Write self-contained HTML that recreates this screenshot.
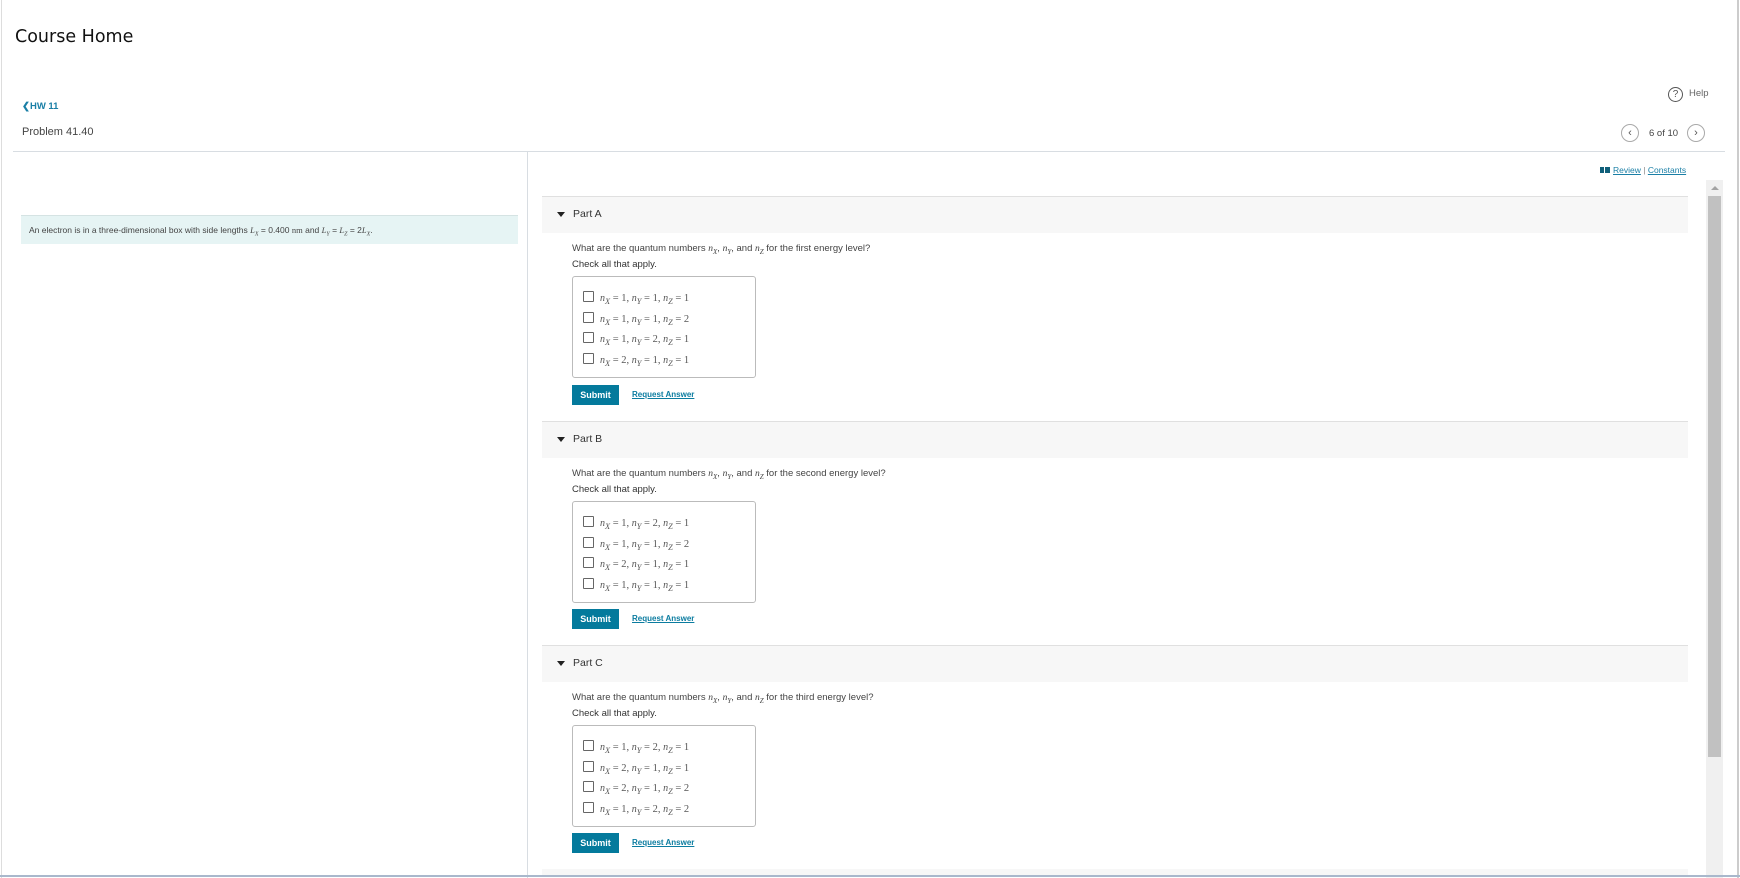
<!DOCTYPE html>
<html><head><meta charset="utf-8"><style>
*{margin:0;padding:0;box-sizing:border-box}
body{width:1740px;height:878px;overflow:hidden;background:#fff;font-family:"Liberation Sans",Arial,sans-serif;color:#333;position:relative}
.a{position:absolute}
.m{font-family:"Liberation Serif",serif;font-style:italic}
.part{position:absolute;left:542px;width:1146px;height:37px;background:#f7f7f7;border-top:1px solid #e0e0e0}
.part .tri{position:absolute;left:15px;top:15px;width:0;height:0;border-left:4px solid transparent;border-right:4px solid transparent;border-top:5px solid #222}
.part .t{position:absolute;left:31px;top:11px;font-size:10.5px;color:#333}
.q{position:absolute;left:572px;font-size:9.5px;color:#444;white-space:nowrap}
.box{position:absolute;left:572px;width:184px;height:102px;border:1px solid #bbb;border-radius:3px}
.opt{position:absolute;left:10px;font-family:"Liberation Serif",serif;font-size:10.5px;color:#555;white-space:nowrap}
.opt:before{content:"";display:inline-block;width:9px;height:9px;border:1px solid #666;border-radius:1px;margin-right:6px;vertical-align:-1px}
.opt i{font-size:10px}
.sub{position:absolute;left:572px;width:47px;height:20px;background:#047a9c;color:#fff;font-size:9px;font-weight:bold;text-align:center;line-height:20px}
.req{position:absolute;left:632px;font-size:8px;font-weight:bold;color:#0b7ca0;text-decoration:underline}
</style></head><body>
<div class="a" style="left:1px;top:0;width:1px;height:878px;background:#ddd"></div>
<div class="a" style="left:1737px;top:0;width:2px;height:878px;background:#ccc"></div>
<div class="a" style="left:15px;top:27px;font-size:17.5px;color:#111;font-family:'DejaVu Sans',sans-serif">Course Home</div>
<div class="a" style="left:22px;top:101px;font-size:9.5px;font-weight:bold;color:#1a7fa6">&#10094;HW 11</div>
<div class="a" style="left:22px;top:126px;font-size:11px;color:#444">Problem 41.40</div>
<div class="a" style="left:1668px;top:87px;width:15px;height:15px;border:1.3px solid #555;border-radius:50%;font-size:10px;text-align:center;line-height:13px;color:#555">?</div>
<div class="a" style="left:1689px;top:88px;font-size:9.5px;color:#666">Help</div>
<div class="a" style="left:1621px;top:124px;width:18px;height:18px;border:1px solid #aaa;border-radius:50%;font-size:11px;text-align:center;line-height:16px;color:#555">&lsaquo;</div>
<div class="a" style="left:1649px;top:128px;font-size:9.5px;color:#444">6 of 10</div>
<div class="a" style="left:1687px;top:124px;width:18px;height:18px;border:1px solid #aaa;border-radius:50%;font-size:11px;text-align:center;line-height:16px;color:#555">&rsaquo;</div>
<div class="a" style="left:13px;top:151px;width:1712px;height:1px;background:#d8dde2"></div>
<div class="a" style="left:527px;top:152px;width:1px;height:726px;background:#d8dde2"></div>
<div class="a" style="left:21px;top:215px;width:497px;height:29px;background:#e6f4f4;border-top:1px solid #d5e3e3"></div>
<div class="a" style="left:29px;top:225px;font-size:8.5px;color:#444;white-space:nowrap">An electron is in a three-dimensional box with side lengths <span class="m">L<sub style="font-size:6px">X</sub></span> = 0.400 <span style="font-family:'Liberation Serif',serif">nm</span> and <span class="m">L<sub style="font-size:6px">Y</sub></span> = <span class="m">L<sub style="font-size:6px">Z</sub></span> = 2<span class="m">L<sub style="font-size:6px">X</sub></span>.</div>
<div class="a" style="left:1600px;top:167px;width:4px;height:6px;background:#0f5f7a"></div>
<div class="a" style="left:1605px;top:167px;width:5px;height:6px;background:#0f5f7a"></div>
<div class="a" style="left:1613px;top:165px;font-size:8.5px;color:#1a7fa6;white-space:nowrap"><u>Review</u> <span style="color:#888">|</span> <u>Constants</u></div>
<div class="a" style="left:1706px;top:180px;width:17px;height:698px;background:#f0f0f0"></div>
<div class="a" style="left:1711px;top:186px;width:0;height:0;border-left:4px solid transparent;border-right:4px solid transparent;border-bottom:4px solid #a3a3a3"></div>
<div class="a" style="left:1708px;top:196px;width:13px;height:561px;background:#c1c1c1"></div>
<div class="a" style="left:0;top:875px;width:1740px;height:2px;background:#a9b8cc"></div>

<div class="part" style="top:196px"><div class="tri"></div><div class="t">Part A</div></div>
<div class="q" style="top:243px">What are the quantum numbers <span class="m">n<sub style="font-size:7px">X</sub></span>, <span class="m">n<sub style="font-size:7px">Y</sub></span>, and <span class="m">n<sub style="font-size:7px">Z</sub></span> for the first energy level?</div>
<div class="q" style="top:259px;color:#333">Check all that apply.</div>
<div class="box" style="top:276px">
<div class="opt" style="top:14px"><i>n<sub>X</sub></i> = 1, <i>n<sub>Y</sub></i> = 1, <i>n<sub>Z</sub></i> = 1</div>
<div class="opt" style="top:35px"><i>n<sub>X</sub></i> = 1, <i>n<sub>Y</sub></i> = 1, <i>n<sub>Z</sub></i> = 2</div>
<div class="opt" style="top:55px"><i>n<sub>X</sub></i> = 1, <i>n<sub>Y</sub></i> = 2, <i>n<sub>Z</sub></i> = 1</div>
<div class="opt" style="top:76px"><i>n<sub>X</sub></i> = 2, <i>n<sub>Y</sub></i> = 1, <i>n<sub>Z</sub></i> = 1</div>
</div>
<div class="sub" style="top:385px">Submit</div>
<div class="req" style="top:390px">Request Answer</div>

<div class="part" style="top:421px"><div class="tri"></div><div class="t">Part B</div></div>
<div class="q" style="top:468px">What are the quantum numbers <span class="m">n<sub style="font-size:7px">X</sub></span>, <span class="m">n<sub style="font-size:7px">Y</sub></span>, and <span class="m">n<sub style="font-size:7px">Z</sub></span> for the second energy level?</div>
<div class="q" style="top:484px;color:#333">Check all that apply.</div>
<div class="box" style="top:501px">
<div class="opt" style="top:14px"><i>n<sub>X</sub></i> = 1, <i>n<sub>Y</sub></i> = 2, <i>n<sub>Z</sub></i> = 1</div>
<div class="opt" style="top:35px"><i>n<sub>X</sub></i> = 1, <i>n<sub>Y</sub></i> = 1, <i>n<sub>Z</sub></i> = 2</div>
<div class="opt" style="top:55px"><i>n<sub>X</sub></i> = 2, <i>n<sub>Y</sub></i> = 1, <i>n<sub>Z</sub></i> = 1</div>
<div class="opt" style="top:76px"><i>n<sub>X</sub></i> = 1, <i>n<sub>Y</sub></i> = 1, <i>n<sub>Z</sub></i> = 1</div>
</div>
<div class="sub" style="top:609px">Submit</div>
<div class="req" style="top:614px">Request Answer</div>

<div class="part" style="top:645px"><div class="tri"></div><div class="t">Part C</div></div>
<div class="q" style="top:692px">What are the quantum numbers <span class="m">n<sub style="font-size:7px">X</sub></span>, <span class="m">n<sub style="font-size:7px">Y</sub></span>, and <span class="m">n<sub style="font-size:7px">Z</sub></span> for the third energy level?</div>
<div class="q" style="top:708px;color:#333">Check all that apply.</div>
<div class="box" style="top:725px">
<div class="opt" style="top:14px"><i>n<sub>X</sub></i> = 1, <i>n<sub>Y</sub></i> = 2, <i>n<sub>Z</sub></i> = 1</div>
<div class="opt" style="top:35px"><i>n<sub>X</sub></i> = 2, <i>n<sub>Y</sub></i> = 1, <i>n<sub>Z</sub></i> = 1</div>
<div class="opt" style="top:55px"><i>n<sub>X</sub></i> = 2, <i>n<sub>Y</sub></i> = 1, <i>n<sub>Z</sub></i> = 2</div>
<div class="opt" style="top:76px"><i>n<sub>X</sub></i> = 1, <i>n<sub>Y</sub></i> = 2, <i>n<sub>Z</sub></i> = 2</div>
</div>
<div class="sub" style="top:833px">Submit</div>
<div class="req" style="top:838px">Request Answer</div>
<div class="a" style="left:542px;top:869px;width:1146px;height:6px;background:#f7f7f7"></div>
</body></html>
